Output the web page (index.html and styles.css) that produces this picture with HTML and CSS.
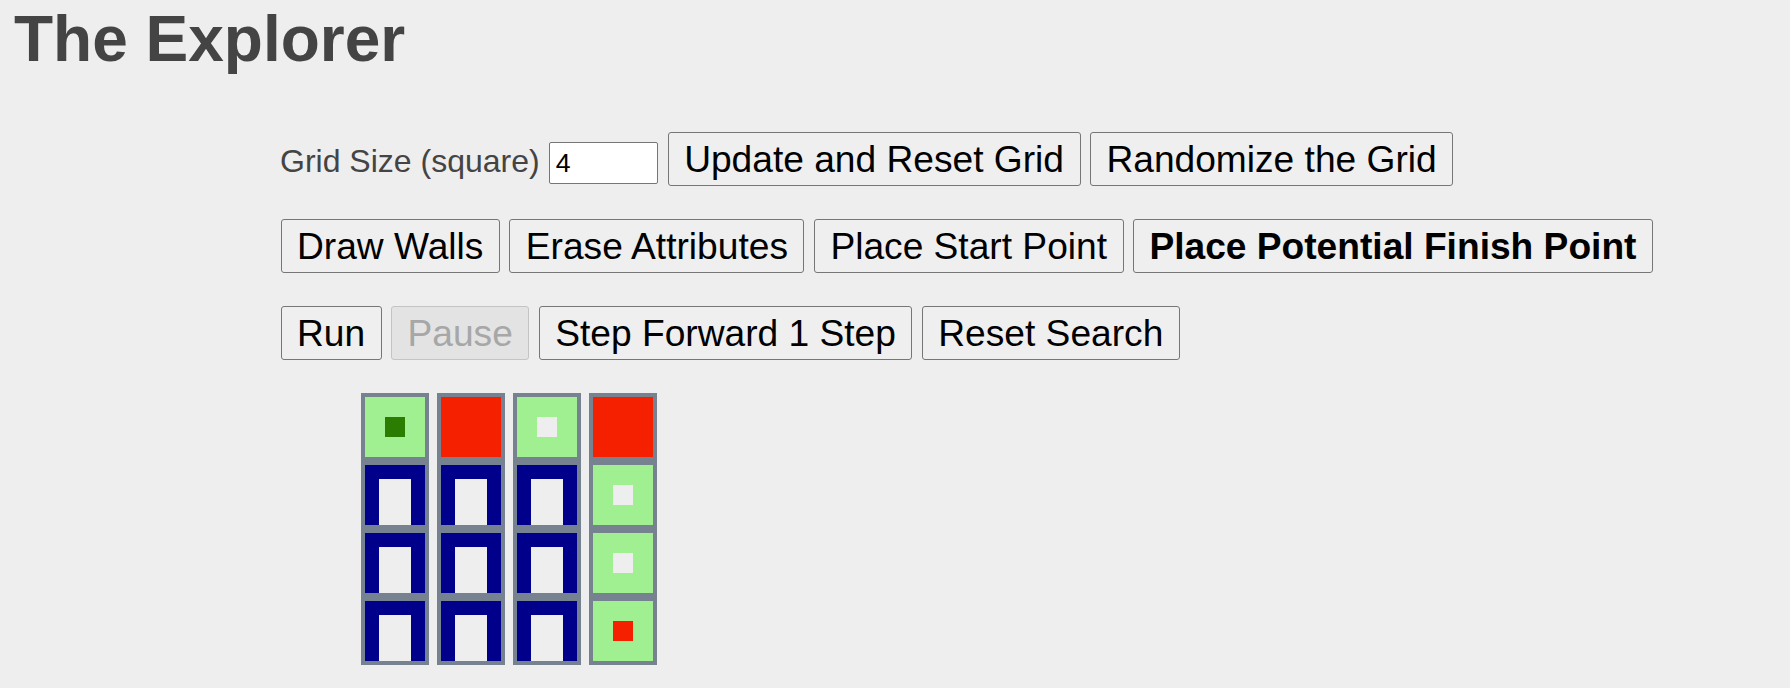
FILE: index.html
```html
<!DOCTYPE html>
<html lang="en">
<head>
<meta charset="utf-8">
<title>The Explorer</title>
<link rel="stylesheet" href="styles.css">
</head>
<body>
<h1 class="title">The Explorer</h1>
<div class="panel">
  <div class="row">
    <label class="label" for="size">Grid Size (square)</label>
    <input id="size" class="size-input" type="text" value="4">
    <button class="btn">Update and Reset Grid</button>
    <button class="btn">Randomize the Grid</button>
  </div>
  <div class="row">
    <button class="btn">Draw Walls</button>
    <button class="btn">Erase Attributes</button>
    <button class="btn">Place Start Point</button>
    <button class="btn btn-active">Place Potential Finish Point</button>
  </div>
  <div class="row">
    <button class="btn">Run</button>
    <button class="btn" disabled>Pause</button>
    <button class="btn">Step Forward 1 Step</button>
    <button class="btn">Reset Search</button>
  </div>
  <div class="grid">
    <div class="col">
      <div class="cell open"><div class="dot dot-start"></div></div>
      <div class="cell wall"><div class="hole"></div></div>
      <div class="cell wall"><div class="hole"></div></div>
      <div class="cell wall"><div class="hole"></div></div>
    </div>
    <div class="col">
      <div class="cell finish"></div>
      <div class="cell wall"><div class="hole"></div></div>
      <div class="cell wall"><div class="hole"></div></div>
      <div class="cell wall"><div class="hole"></div></div>
    </div>
    <div class="col">
      <div class="cell open"><div class="dot dot-visited"></div></div>
      <div class="cell wall"><div class="hole"></div></div>
      <div class="cell wall"><div class="hole"></div></div>
      <div class="cell wall"><div class="hole"></div></div>
    </div>
    <div class="col">
      <div class="cell finish"></div>
      <div class="cell open"><div class="dot dot-visited"></div></div>
      <div class="cell open"><div class="dot dot-visited"></div></div>
      <div class="cell open"><div class="dot dot-found"></div></div>
    </div>
  </div>
</div>
</body>
</html>
```

FILE: styles.css
```css
html, body {
  margin: 0;
  padding: 0;
  background: #eeeeee;
}

body {
  font-family: "Liberation Sans", Arial, sans-serif;
  color: #444444;
}

.title {
  margin: 0;
  padding: 2px 0 0 14px;
  font-size: 64px;
  font-weight: bold;
  line-height: normal;
  color: #444444;
}

.panel {
  margin: 56px 0 0 280.5px;
  display: flex;
  flex-direction: column;
  gap: 33px;
}

.row {
  display: flex;
  align-items: baseline;
  gap: 9.4px;
}

.label {
  font-size: 32px;
  color: #444444;
  margin-left: -0.5px;
  margin-right: -0.3px;
}

.size-input {
  box-sizing: border-box;
  width: 109.5px;
  height: 42px;
  margin: 0;
  padding: 0 6px;
  border: 1px solid #767676;
  border-radius: 2px;
  background: #ffffff;
  color: #000000;
  font-family: "Liberation Sans", Arial, sans-serif;
  font-size: 26.67px;
  outline: none;
}

.btn {
  box-sizing: border-box;
  height: 54px;
  margin: 0;
  padding: 0 15.5px;
  border: 1px solid #767676;
  border-radius: 3px;
  background: #efefef;
  color: #000000;
  font-family: "Liberation Sans", Arial, sans-serif;
  font-size: 37.15px;
  line-height: normal;
  white-space: nowrap;
}

.btn-active {
  font-weight: bold;
}

.btn:disabled {
  background: #e3e3e3;
  border-color: #c4c4c4;
  color: #a7a7a7;
}

.grid {
  display: flex;
  gap: 8px;
  margin-left: 80.5px;
  align-items: flex-start;
}

.col {
  display: flex;
  flex-direction: column;
}

.cell {
  width: 60px;
  height: 60px;
  border: 4px solid #76828f;
  display: flex;
  align-items: center;
  justify-content: center;
}

.open {
  background: #a0ef90;
}

.finish {
  background: #f52000;
}

.wall {
  background: #00008b;
  box-sizing: content-box;
  width: 32px;
  height: 46px;
  padding: 14px 14px 0 14px;
  align-items: stretch;
  justify-content: stretch;
}

.hole {
  flex: 1;
  background: #eeeeee;
}

.dot {
  width: 20px;
  height: 20px;
}

.dot-start {
  background: #2a7d00;
}

.dot-visited {
  background: #eeeeee;
}

.dot-found {
  background: #f52000;
}
```
